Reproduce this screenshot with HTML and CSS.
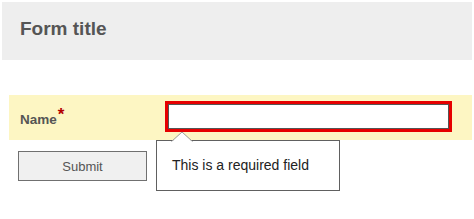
FILE: index.html
```html
<!DOCTYPE html>
<html>
<head>
<meta charset="utf-8">
<link rel="stylesheet" href="styles.css">
</head>
<body>
<div class="header"><h1 class="title">Form title</h1></div>
<form class="form">
  <div class="row">
    <label class="label" for="name">Name<span class="req">*</span></label>
    <div class="field-wrap">
      <input class="field" id="name" type="text">
      <div class="tooltip">
        <svg class="arrow" width="22" height="11" viewBox="0 0 22 11">
          <polygon points="0.5,11 11,1 21.5,11" fill="#fff"/>
          <polyline points="0.5,10.5 11,1 21.5,10.5" fill="none" stroke="#9a9a9a" stroke-width="1"/>
        </svg>
        <span class="tip-text">This is a required field</span>
      </div>
    </div>
  </div>
  <button class="submit" type="button">Submit</button>
</form>
</body>
</html>
```
FILE: styles.css
```css
html, body {
  margin: 0;
  padding: 0;
  background: #fff;
  font-family: "Liberation Sans", Arial, sans-serif;
}
body {
  min-height: 219px;
}
.header {
  margin: 2px 2px 0 2px;
  height: 58px;
  background: #eeeeee;
  box-sizing: border-box;
  padding: 16px 0 0 18px;
}
.title {
  margin: 0;
  font-size: 19px;
  font-weight: bold;
  color: #555;
}
.form {
  margin: 35px 2px 0 9px;
  padding-bottom: 37px;
}
.row {
  height: 45px;
  background: #fdf6c3;
  display: flex;
  align-items: flex-start;
  padding-left: 11px;
  box-sizing: border-box;
}
.label {
  width: 148px;
  flex: none;
  font-size: 13.5px;
  font-weight: bold;
  color: #555;
  margin-top: 14px;
}
.req {
  color: #b30000;
  font-size: 17px;
  position: relative;
  top: -4px;
  margin-left: 1px;
}
.field-wrap {
  position: relative;
  width: 281px;
  height: 45px;
}
.field {
  display: block;
  margin: 9px 0 0 0;
  width: 281px;
  height: 25px;
  box-sizing: border-box;
  border: 1px solid #555;
  box-shadow: 0 0 0 3px #e60000;
  background: #fff;
  padding: 0;
  outline: none;
}
.tooltip {
  position: absolute;
  left: -12px;
  top: 45px;
  width: 184px;
  height: 51px;
  box-sizing: border-box;
  border: 1px solid #606060;
  background: #fff;
  z-index: 2;
}
.tip-text {
  display: block;
  font-size: 14px;
  color: #222;
  padding: 16px 0 0 15px;
}
.arrow {
  position: absolute;
  left: 14px;
  top: -10px;
  display: block;
}
.submit {
  display: block;
  margin: 11px 0 0 9px;
  width: 129px;
  height: 30px;
  background: #f0f0f0;
  border: 1px solid #707070;
  font-family: "Liberation Sans", Arial, sans-serif;
  font-size: 13px;
  color: #555;
  padding: 0;
}
```
